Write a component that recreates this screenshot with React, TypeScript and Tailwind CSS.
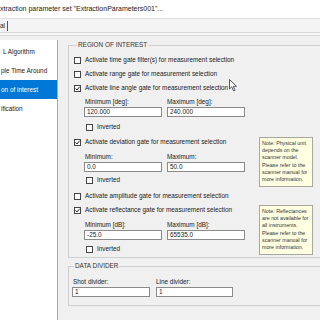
import React from 'react';

function Check({ checked }: { checked?: boolean }) {
  return (
    <span className="flex h-[7px] w-[7px] shrink-0 items-center justify-center border border-[#444] bg-white">
      {checked && (
        <svg width="5" height="5" viewBox="0 0 5 5">
          <path d="M0.5 2.4 L2 4 L4.6 0.8" fill="none" stroke="#222" strokeWidth="1" />
        </svg>
      )}
    </span>
  );
}

function CheckRow({ label, checked, sub }: { label: string; checked?: boolean; sub?: boolean }) {
  return (
    <div className={`flex h-[14px] items-center ${sub ? 'pl-[12px]' : ''}`}>
      <Check checked={checked} />
      <span className="ml-[4px] whitespace-nowrap">{label}</span>
    </div>
  );
}

function Field({ value, w = 'w-[78px]' }: { value: string; w?: string }) {
  return (
    <div className={`flex h-[10px] ${w} items-center border border-[#8a8a8a] bg-white px-[2px] leading-none`}>
      {value}
    </div>
  );
}

function RangeFields({ minLabel, maxLabel, min, max }: { minLabel: string; maxLabel: string; min: string; max: string }) {
  return (
    <div className="pl-[10px]">
      <div className="flex h-[11px] items-center">
        <span className="w-[83px] pl-[1px]">{minLabel}</span>
        <span>{maxLabel}</span>
      </div>
      <div className="flex gap-[5px]">
        <Field value={min} />
        <Field value={max} />
      </div>
    </div>
  );
}

function Note({ lines }: { lines: string[] }) {
  return (
    <div className="ml-[5px] h-[50px] w-[54px] shrink-0 border border-[#a8a8a0] bg-[#ffffe1] px-[2px] pt-[2px] text-[5.3px] leading-[7.2px] text-[#333]">
      {lines.map((l) => (
        <div key={l} className="whitespace-nowrap">{l}</div>
      ))}
    </div>
  );
}

export default function App() {
  const items = ['L Algorithm', 'ple Time Around', 'on of interest', 'ification'];
  return (
    <div className="relative h-[320px] w-[320px] overflow-hidden bg-[#f0f0f0] font-['Liberation_Sans',sans-serif] text-[6.4px] text-[#1a1a1a]">
      {/* window title */}
      <div className="flex h-[19px] items-center border-b border-[#e0e0e0] bg-white text-[7px] text-[#222] whitespace-nowrap">
        xtraction parameter set "ExtractionParameters001"...
      </div>

      {/* tab header */}
      <div className="flex h-[14px] items-center border-b border-[#d6d6d6] bg-[#f4f4f4]">
        <span className="text-[6.5px]">al</span>
        <span className="ml-[2px] h-[10px] w-px bg-[#555]" />
      </div>
      <div className="h-[3px] border-b border-[#dadada] bg-[#f7f7f7]" />

      <div className="flex pt-[4px]">
        {/* page list */}
        <div className="h-[290px] w-[58px] shrink-0 border-r border-[#a8a8a8] bg-white pt-[2px]">
          {items.map((it) => (
            <div
              key={it}
              className={`flex h-[19px] items-center whitespace-nowrap ${
                it === 'on of interest' ? 'bg-[#0078d7] pl-[1px] text-white' : it === 'L Algorithm' ? 'pl-[3px]' : 'pl-[1px]'
              }`}
            >
              {it}
            </div>
          ))}
        </div>

        {/* settings */}
        <div className="flex flex-col pl-[10px]">
          <fieldset className="w-[270px] border border-[#cfcfcf] pb-[1px] pl-[5px]">
            <legend className="ml-[3px] px-[1px] leading-[10px] text-[#333]">REGION OF INTEREST</legend>
            <div className="pt-[3px]">
              <CheckRow label="Activate time gate filter(s) for measurement selection" />
              <CheckRow label="Activate range gate for measurement selection" />
              <CheckRow label="Activate line angle gate for measurement selection" checked />
              <div className="mt-[1px]">
                <RangeFields minLabel="Minimum [deg]:" maxLabel="Maximum [deg]:" min="120.000" max="240.000" />
              </div>
              <div className="mt-[3px]">
                <CheckRow label="Inverted" sub />
              </div>

              <div className="mt-[1px] flex">
                <div className="w-[180px] shrink-0">
                  <CheckRow label="Activate deviation gate for measurement selection" checked />
                  <div className="mt-[2px]">
                    <RangeFields minLabel="Minimum:" maxLabel="Maximum:" min="0.0" max="50.0" />
                  </div>
                  <div className="mt-[1px]">
                    <CheckRow label="Inverted" sub />
                  </div>
                </div>
                <div className="mt-[2px]">
                  <Note lines={['Note: Physical unit', 'depends on the', 'scanner model.', 'Please refer to the', 'scanner manual for', 'more information.']} />
                </div>
              </div>

              <div className="mt-[2px]">
                <CheckRow label="Activate amplitude gate for measurement selection" />
              </div>
              <div className="flex">
                <div className="w-[180px] shrink-0">
                  <CheckRow label="Activate reflectance gate for measurement selection" checked />
                  <div className="mt-[2px]">
                    <RangeFields minLabel="Minimum [dB]:" maxLabel="Maximum [dB]:" min="-25.0" max="65535.0" />
                  </div>
                  <div className="mt-[2px]">
                    <CheckRow label="Inverted" sub />
                  </div>
                </div>
                <div className="mt-[2px]">
                  <Note lines={['Note: Reflectances', 'are not available for', 'all instruments.', 'Please refer to the', 'scanner manual for', 'more information.']} />
                </div>
              </div>
            </div>
          </fieldset>

          <fieldset className="mt-[3px] w-[270px] border border-[#cfcfcf] pb-[8px] pl-[3px]">
            <legend className="ml-[2px] px-[1px] leading-[10px] text-[#333]">DATA DIVIDER</legend>
            <div className="mt-[5px] flex h-[11px] items-center">
              <span className="w-[84px] pl-[1px]">Shot divider:</span>
              <span>Line divider:</span>
            </div>
            <div className="flex gap-[6px]">
              <Field value="1" />
              <Field value="1" w="w-[77px]" />
            </div>
          </fieldset>
        </div>
      </div>

      {/* mouse pointer */}
      <svg className="absolute left-[229px] top-[79px]" width="9" height="13" viewBox="0 0 9 13">
        <path d="M0.5 0.5 L0.5 10 L2.8 7.8 L4.5 11.8 L6 11.2 L4.3 7.3 L7.5 7.3 Z" fill="#fff" stroke="#333" strokeWidth="0.8" />
      </svg>
    </div>
  );
}
